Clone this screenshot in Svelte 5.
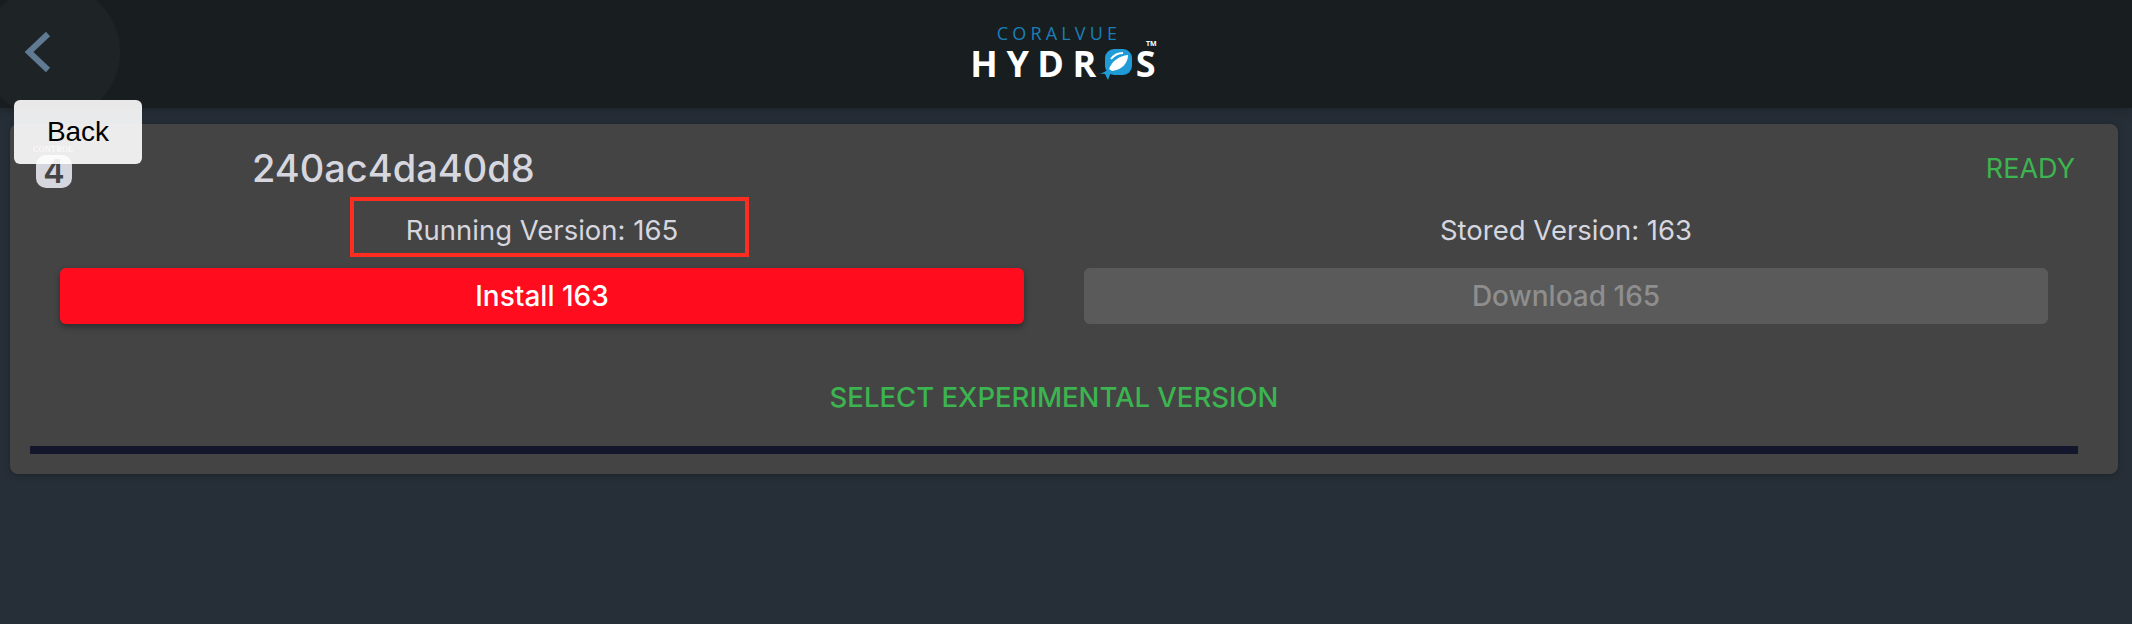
<script>
  let running = 165;
  let stored = 163;
</script>

<div class="page">
  <header class="topbar">
    <button class="back-circle" aria-label="Back">
      <svg width="30" height="42" viewBox="0 0 30 42">
        <path d="M25 3 L6 21 L25 39" fill="none" stroke="#5f7a92" stroke-width="6" />
      </svg>
    </button>
    <div class="logo">
      <div class="logo-top">CORALVUE</div>
      <div class="logo-main">
        <span>HYDR</span>
        <svg class="logo-o" width="38" height="34" viewBox="0 0 38 34">
          <rect x="10" y="2" width="27" height="26" rx="9" fill="#1f9bd7" />
          <path d="M0 26 C5 27 9 26 12 23 C15 14 23 9 32 8 C32 17 26 25 16 25 L13 33 L10 27 Z" fill="#1f9bd7" />
          <path d="M14 22 C17 14 24 9 33 8 C33 16 27 23 17 24 Z" fill="#fff" />
          <path d="M16 12 C19 8 23 6 28 6" fill="none" stroke="#fff" stroke-width="2" />
        </svg>
        <span class="logo-s">S</span>
        <sup class="tm">TM</sup>
      </div>
    </div>
  </header>

  <div class="tooltip">Back</div>

  <section class="card">
    <div class="card-top">
      <div class="id-col">
        <div class="control">CONTROL</div>
        <div class="badge">4</div>
      </div>
      <div class="title">240ac4da40d8</div>
      <div class="status">READY</div>
    </div>

    <div class="versions">
      <div class="version-col">
        <div class="version">Running Version: {running}</div>
        <button class="btn install">Install {stored}</button>
      </div>
      <div class="version-col">
        <div class="version">Stored Version: {stored}</div>
        <button class="btn download" disabled>Download {running}</button>
      </div>
    </div>

    <div class="experimental">SELECT EXPERIMENTAL VERSION</div>
    <div class="progress"></div>

    <div class="highlight"></div>
  </section>
</div>

<style>
  :global(body) {
    margin: 0;
    background: #262e37;
  }

  .page {
    position: relative;
    height: 624px;
    overflow: hidden;
    background: #262e37;
    font-family: Inter, "Liberation Sans", sans-serif;
  }

  .topbar {
    height: 108px;
    background: #181d20;
    box-shadow: 0 2px 12px rgba(0, 0, 0, 0.25);
    display: flex;
    justify-content: center;
    align-items: flex-start;
    overflow: hidden;
    position: relative;
  }

  .back-circle {
    position: absolute;
    left: -16px;
    top: -16px;
    width: 136px;
    height: 136px;
    border: none;
    border-radius: 50%;
    background: #1e2426;
    padding: 0 0 0 39px;
    display: flex;
    align-items: center;
  }

  .logo {
    margin-top: 25px;
    margin-left: -6px;
    display: flex;
    flex-direction: column;
    align-items: center;
  }

  .logo-top {
    font-size: 18px;
    line-height: 16px;
    letter-spacing: 4.2px;
    margin-right: 8px;
    color: #1a7fb5;
    font-family: "Open Sans", sans-serif;
  }

  .logo-main {
    display: flex;
    align-items: center;
    position: relative;
    margin-top: 8px;
    height: 30px;
    line-height: 30px;
    color: #fff;
    font-family: "Open Sans", sans-serif;
    font-weight: 700;
    font-size: 36px;
    letter-spacing: 8.5px;
  }

  .logo-o {
    margin: 0 3px 0 -10px;
  }

  .logo-s {
    letter-spacing: 0;
  }

  .tm {
    position: absolute;
    right: -1px;
    top: -9px;
    font-size: 7px;
    letter-spacing: 0;
    line-height: 8px;
    margin: 0;
  }

  .tooltip {
    position: absolute;
    left: 14px;
    top: 100px;
    width: 128px;
    height: 64px;
    border-radius: 6px;
    background: rgba(255, 255, 255, 0.9);
    color: #000;
    font-family: "Liberation Sans", sans-serif;
    font-size: 28px;
    display: flex;
    align-items: center;
    justify-content: center;
    z-index: 2;
  }

  .card {
    position: relative;
    margin: 16px 14px 0 10px;
    height: 350px;
    box-sizing: border-box;
    padding: 0 40px 20px 20px;
    background: #444;
    border-radius: 8px;
    box-shadow: 0 1px 6px rgba(0, 0, 0, 0.25);
    display: flex;
    flex-direction: column;
    color: #d6d6df;
  }

  .card-top {
    height: 73px;
    display: flex;
    align-items: flex-start;
  }

  .id-col {
    width: 222px;
    padding-top: 21px;
    display: flex;
    flex-direction: column;
    align-items: flex-start;
  }

  .control {
    position: relative;
    z-index: 3;
    font-size: 8px;
    line-height: 10px;
    margin-left: 3px;
    letter-spacing: 0.4px;
    color: #fff;
    font-family: "Liberation Serif", serif;
  }

  .badge {
    margin-left: 6px;
    width: 36px;
    height: 33px;
    border-radius: 10px;
    background: #d6d6df;
    color: #444;
    font-size: 32px;
    font-weight: 600;
    line-height: 33px;
    text-align: center;
  }

  .title {
    font-size: 38px;
    font-weight: 500;
    line-height: 44px;
    flex: 1;
    margin-top: 22px;
  }

  .status {
    font-size: 27px;
    line-height: 32px;
    color: #3cb44f;
    margin-top: 29px;
    margin-right: 3px;
  }

  .versions {
    display: grid;
    grid-template-columns: 1fr 1fr;
    gap: 60px;
    padding: 0 30px;
    margin-top: 14px;
  }

  .version-col {
    display: flex;
    flex-direction: column;
    align-items: stretch;
    gap: 19px;
  }

  .version {
    font-size: 27.5px;
    line-height: 38px;
    text-align: center;
  }

  .btn {
    height: 56px;
    border: none;
    border-radius: 6px;
    font-family: inherit;
    font-size: 28px;
    font-weight: 500;
  }

  .install {
    background: #ff0c1e;
    color: #fff;
    box-shadow: 0 3px 6px rgba(0, 0, 0, 0.35);
  }

  .download {
    background: #5a5a5a;
    color: #8e8e8e;
  }

  .experimental {
    margin-top: 55px;
    text-align: center;
    font-size: 27.5px;
    font-weight: 500;
    line-height: 36px;
    color: #3cb44f;
  }

  .progress {
    margin-top: 31px;
    height: 8px;
    background: #14162c;
  }

  .highlight {
    position: absolute;
    left: 340px;
    top: 73px;
    width: 391px;
    height: 52px;
    border: 4px solid #ff2d20;
  }
</style>
